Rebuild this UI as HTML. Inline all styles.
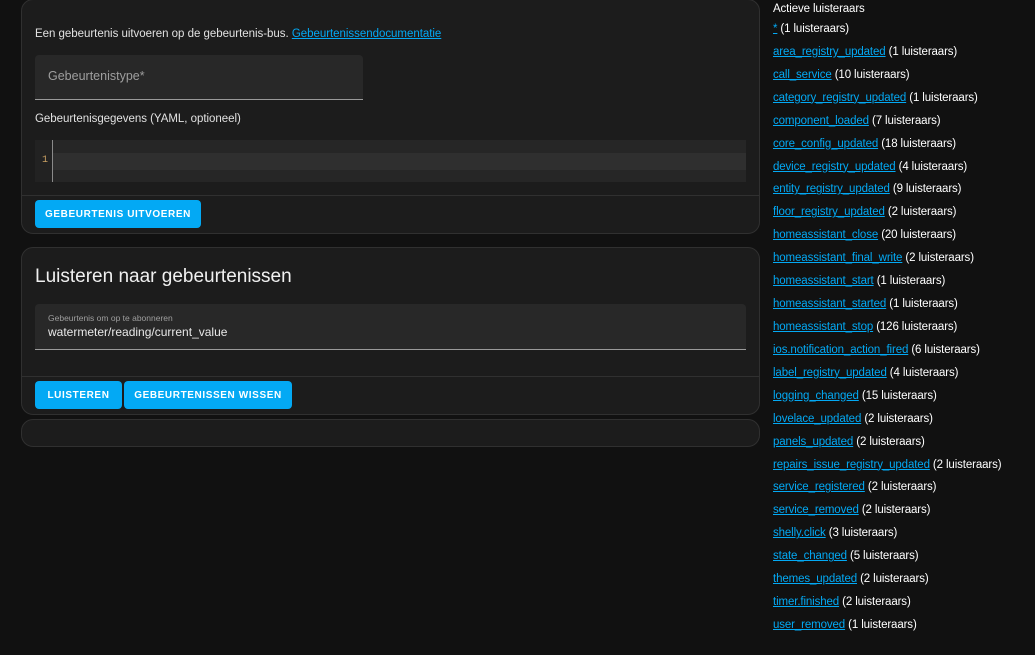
<!DOCTYPE html>
<html><head><style>
*{box-sizing:border-box;margin:0;padding:0}
body{width:1035px;height:655px;background:#111111;font-family:"Liberation Sans",sans-serif;color:#e1e1e1;position:relative;overflow:hidden;font-size:12px}
.card{position:absolute;left:21px;width:739px;background:#1c1c1c;border:1px solid #303030;border-radius:12px}
.abs{position:absolute}
a{color:#03a9f4;text-decoration:underline}
.btn{position:absolute;background:#03a9f4;color:#fff;font-weight:bold;font-size:10px;letter-spacing:0.6px;border-radius:4px;text-align:center;line-height:30px;height:28px}
.div{position:absolute;left:0;right:0;height:1px;background:#303030}
.list{position:absolute;left:773px;top:1px;font-size:11.5px;letter-spacing:-0.12px;color:#fff}
.list div{height:22.93px;line-height:18px}
</style></head><body>
<div class="card" style="top:-1px;height:235px">
 <div class="abs" style="left:13px;top:28px;font-size:11.5px;letter-spacing:-0.03px;color:#e1e1e1">Een gebeurtenis uitvoeren op de gebeurtenis-bus. <a>Gebeurtenissendocumentatie</a></div>
 <div class="abs" style="left:13px;top:55px;width:328px;height:45px;background:#282828;border-radius:4px 4px 0 0;border-bottom:1px solid #9a9a9a"><span class="abs" style="left:13px;top:14px;font-size:12.5px;color:#9e9e9e">Gebeurtenistype*</span></div>
 <div class="abs" style="left:13px;top:113px;font-size:11.5px;letter-spacing:-0.03px;color:#e1e1e1">Gebeurtenisgegevens (YAML, optioneel)</div>
 <div class="abs" style="left:13px;top:140px;width:711px;height:42px;background:#262626">
  <div class="abs" style="left:0;top:0;width:18px;height:42px;background:#222"></div>
  <div class="abs" style="left:17px;top:0;width:1px;height:42px;background:#8a8a8a"></div>
  <div class="abs" style="left:18px;top:13px;right:0;height:17px;background:#2f2f2f"></div>
  <span class="abs" style="left:7px;top:15px;font-family:'Liberation Mono',monospace;font-size:10px;color:#c9a062">1</span>
 </div>
 <div class="div" style="top:195px"></div>
 <div class="btn" style="left:13px;top:200px;width:166px">GEBEURTENIS UITVOEREN</div>
</div>
<div class="card" style="top:247px;height:168px">
 <div class="abs" style="left:13px;top:18px;font-size:19px;color:#f0f0f0">Luisteren naar gebeurtenissen</div>
 <div class="abs" style="left:13px;top:56px;width:711px;height:46px;background:#282828;border-radius:4px 4px 0 0;border-bottom:1px solid #9a9a9a">
  <span class="abs" style="left:13px;top:9px;font-size:8.5px;color:#9e9e9e">Gebeurtenis om op te abonneren</span>
  <span class="abs" style="left:13px;top:21px;font-size:12px;color:#e8e8e8">watermeter/reading/current_value</span>
 </div>
 <div class="div" style="top:128px"></div>
 <div class="btn" style="left:13px;top:133px;width:87px">LUISTEREN</div>
 <div class="btn" style="left:102px;top:133px;width:168px">GEBEURTENISSEN WISSEN</div>
</div>
<div class="card" style="top:419px;height:28px"></div>
<div class="list">
<div style="height:19px;line-height:16px">Actieve luisteraars</div>
<div><a>*</a> (1 luisteraars)</div>
<div><a>area_registry_updated</a> (1 luisteraars)</div>
<div><a>call_service</a> (10 luisteraars)</div>
<div><a>category_registry_updated</a> (1 luisteraars)</div>
<div><a>component_loaded</a> (7 luisteraars)</div>
<div><a>core_config_updated</a> (18 luisteraars)</div>
<div><a>device_registry_updated</a> (4 luisteraars)</div>
<div><a>entity_registry_updated</a> (9 luisteraars)</div>
<div><a>floor_registry_updated</a> (2 luisteraars)</div>
<div><a>homeassistant_close</a> (20 luisteraars)</div>
<div><a>homeassistant_final_write</a> (2 luisteraars)</div>
<div><a>homeassistant_start</a> (1 luisteraars)</div>
<div><a>homeassistant_started</a> (1 luisteraars)</div>
<div><a>homeassistant_stop</a> (126 luisteraars)</div>
<div><a>ios.notification_action_fired</a> (6 luisteraars)</div>
<div><a>label_registry_updated</a> (4 luisteraars)</div>
<div><a>logging_changed</a> (15 luisteraars)</div>
<div><a>lovelace_updated</a> (2 luisteraars)</div>
<div><a>panels_updated</a> (2 luisteraars)</div>
<div><a>repairs_issue_registry_updated</a> (2 luisteraars)</div>
<div><a>service_registered</a> (2 luisteraars)</div>
<div><a>service_removed</a> (2 luisteraars)</div>
<div><a>shelly.click</a> (3 luisteraars)</div>
<div><a>state_changed</a> (5 luisteraars)</div>
<div><a>themes_updated</a> (2 luisteraars)</div>
<div><a>timer.finished</a> (2 luisteraars)</div>
<div><a>user_removed</a> (1 luisteraars)</div>
</div>
</body></html>
